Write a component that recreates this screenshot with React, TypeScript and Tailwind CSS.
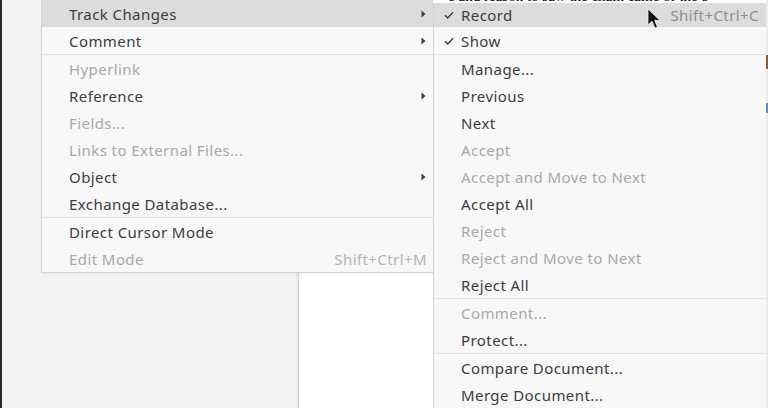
import React from "react";

type Item =
  | { kind: "sep" }
  | {
      kind: "item";
      label: string;
      disabled?: boolean;
      arrow?: boolean;
      check?: boolean;
      shortcut?: string;
      active?: boolean;
      first?: boolean;
    };

const mainItems: Item[] = [
  { kind: "item", label: "Track Changes", arrow: true, active: true },
  { kind: "item", label: "Comment", arrow: true },
  { kind: "sep" },
  { kind: "item", label: "Hyperlink", disabled: true },
  { kind: "item", label: "Reference", arrow: true },
  { kind: "item", label: "Fields...", disabled: true },
  { kind: "item", label: "Links to External Files...", disabled: true },
  { kind: "item", label: "Object", arrow: true },
  { kind: "item", label: "Exchange Database..." },
  { kind: "sep" },
  { kind: "item", label: "Direct Cursor Mode" },
  { kind: "item", label: "Edit Mode", disabled: true, shortcut: "Shift+Ctrl+M" },
];

const subItems: Item[] = [
  { kind: "item", label: "Record", check: true, active: true, shortcut: "Shift+Ctrl+C", first: true },
  { kind: "item", label: "Show", check: true },
  { kind: "sep" },
  { kind: "item", label: "Manage..." },
  { kind: "item", label: "Previous" },
  { kind: "item", label: "Next" },
  { kind: "item", label: "Accept", disabled: true },
  { kind: "item", label: "Accept and Move to Next", disabled: true },
  { kind: "item", label: "Accept All" },
  { kind: "item", label: "Reject", disabled: true },
  { kind: "item", label: "Reject and Move to Next", disabled: true },
  { kind: "item", label: "Reject All" },
  { kind: "sep" },
  { kind: "item", label: "Comment...", disabled: true },
  { kind: "item", label: "Protect..." },
  { kind: "sep" },
  { kind: "item", label: "Compare Document..." },
  { kind: "item", label: "Merge Document..." },
];

function Check() {
  return (
    <svg width="10" height="8" viewBox="0 0 10 8" className="absolute left-[10px] top-1/2 -translate-y-1/2">
      <path d="M1 4.2 L3.8 7 L9 1.2" fill="none" stroke="#3c3c3c" strokeWidth="1.4" />
    </svg>
  );
}

function Arrow() {
  return (
    <svg width="5" height="8" viewBox="0 0 5 8" className="absolute right-[7px] top-1/2 -translate-y-1/2">
      <path d="M0.5 0.5 L4.5 4 L0.5 7.5 Z" fill="#3c3c3c" />
    </svg>
  );
}

function MenuRows({ items, shortcutPad }: { items: Item[]; shortcutPad: string }) {
  return (
    <>
      {items.map((it, i) => {
        if (it.kind === "sep") return <div key={i} className="h-px bg-[#e3e3e3]" />;
        const color = it.disabled ? "text-[#a9a9a9]" : "text-[#3c3c3c]";
        return (
          <div
            key={i}
            className={`relative flex items-center pl-[27px] ${it.first ? "h-[24px]" : "h-[27px]"} ${
              it.active ? "bg-[#dcdcdc]" : ""
            } ${shortcutPad}`}
          >
            {it.check && <Check />}
            <span className={`${color} leading-none relative top-[0.5px]`}>{it.label}</span>
            {it.shortcut && (
              <span
                className={`ml-auto leading-none relative top-[0.5px] ${
                  it.disabled ? "text-[#b4b4b4]" : "text-[#8e8e8e]"
                }`}
              >
                {it.shortcut}
              </span>
            )}
            {it.arrow && <Arrow />}
          </div>
        );
      })}
    </>
  );
}

export default function App() {
  return (
    <div
      className="relative w-[768px] h-[408px] overflow-hidden flex bg-[#f3f3f3] text-[15px] tracking-[0.42px]"
      style={{ fontFamily: '"Noto Sans", "Open Sans", sans-serif' }}
    >
      {/* left window edge */}
      <div className="w-[2px] h-full bg-[#2c2230]" />
      {/* grey workspace */}
      <div className="w-[296px] h-full bg-[#f3f3f3]" />
      {/* white document page */}
      <div className="relative flex-1 h-full bg-white border-l border-[#d6d6d6] shadow-[-1px_0_2px_rgba(0,0,0,0.08)]">
        <div
          className="absolute left-[150px] top-[-15px] whitespace-nowrap text-[15px] tracking-normal text-black"
          style={{ fontFamily: '"Liberation Serif", serif' }}
        >
          s and reason to saw the chain came of the b
        </div>
      </div>
      {/* right edge strip */}
      <div className="w-[2px] h-full flex flex-col bg-[#ececec]">
        <div className="h-[55px]" />
        <div className="h-[14px] bg-[#8a5a3c]" />
        <div className="h-[34px]" />
        <div className="h-[10px] bg-[#5a8fcf]" />
      </div>

      {/* main context menu */}
      <div className="absolute left-[41px] top-0 w-[392px] bg-[#f8f8f8] border-l border-b border-[#d4d4d4] flex flex-col shadow-[0_1px_2px_rgba(0,0,0,0.06)]">
        <MenuRows items={mainItems} shortcutPad="pr-[6px]" />
      </div>

      {/* Track Changes submenu */}
      <div className="absolute left-[433px] top-[3px] w-[333px] h-[405px] bg-[#f8f8f8] border-l border-[#d4d4d4] flex flex-col">
        <MenuRows items={subItems} shortcutPad="pr-[7px]" />
      </div>

      {/* mouse pointer */}
      <svg width="14" height="22" viewBox="0 0 14 22" className="absolute left-[647px] top-[8px]">
        <path
          d="M1 1 L1 17 L5 13.2 L8 20 L10.5 19 L7.6 12.4 L13 12.4 Z"
          fill="#111"
          stroke="#f0f0f0"
          strokeWidth="0.8"
          strokeLinejoin="round"
        />
      </svg>
    </div>
  );
}
